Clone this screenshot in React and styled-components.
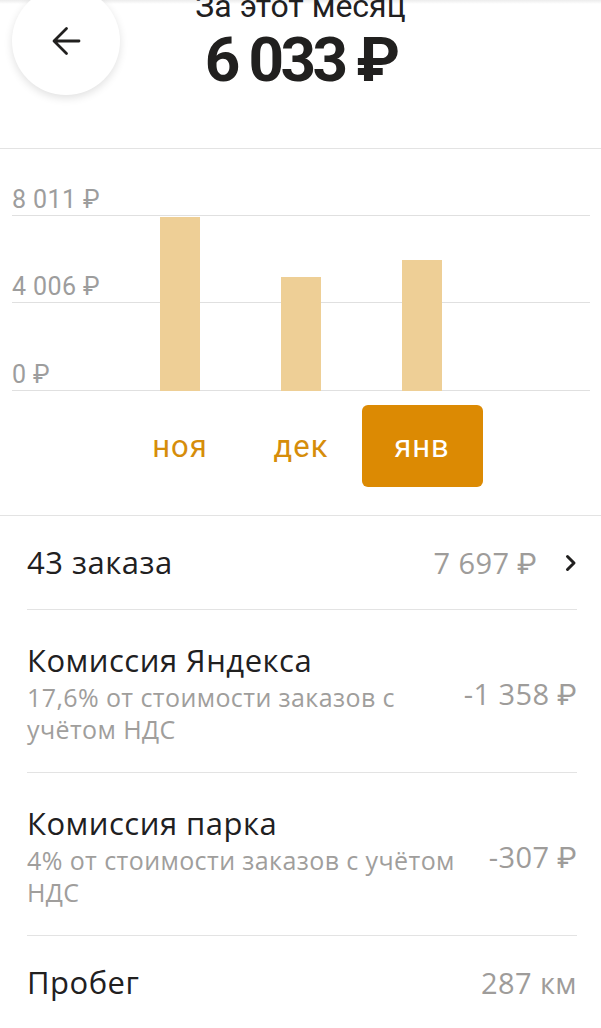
import React from 'react';
import styled, { createGlobalStyle } from 'styled-components';

const GlobalStyle = createGlobalStyle`
  html, body {
    margin: 0;
    padding: 0;
    background: #fff;
  }
  body {
    font-family: "Open Sans", Roboto, "DejaVu Sans", sans-serif;
    color: #21201f;
    overflow: hidden;
  }
`;

const Page = styled.div`
  width: 601px;
  height: 1028px;
  overflow: hidden;
  background: #fff;
`;

const Header = styled.div`
  display: grid;
  grid-template-columns: 120px 1fr 120px;
  height: 148px;
  border-bottom: 1px solid #e3e3e3;
  background: linear-gradient(#ececec, #fff 4px);
`;

const BackButton = styled.button`
  width: 108px;
  height: 108px;
  margin: -13px 0 0 12px;
  border: none;
  border-radius: 50%;
  background: #fff;
  box-shadow: 0 3px 8px rgba(0, 0, 0, 0.12);
  display: flex;
  align-items: center;
  justify-content: center;
  padding: 0;
  cursor: pointer;
`;

const TitleBlock = styled.div`
  display: flex;
  flex-direction: column;
  align-items: center;
  margin-top: -12px;
`;

const Caption = styled.div`
  font-family: Roboto, sans-serif;
  font-size: 32px;
  line-height: 36px;
  color: #21201f;
`;

const Total = styled.div`
  font-family: Roboto, sans-serif;
  font-weight: 700;
  font-size: 62px;
  line-height: 62px;
  letter-spacing: -3.6px;
  margin-top: 5px;
`;

const Chart = styled.div`
  padding: 0 11px 28px 12px;
`;

const Plot = styled.div`
  display: grid;
`;

const Layer = styled.div`
  grid-area: 1 / 1;
`;

const GridRow = styled.div`
  height: ${(p) => p.$h}px;
  border-bottom: 1px solid #e0e0e0;
  display: flex;
  align-items: flex-end;
  box-sizing: border-box;
`;

const AxisLabel = styled.span`
  font-family: Roboto, sans-serif;
  font-size: 25px;
  line-height: 25px;
  letter-spacing: 0.4px;
  color: #9d9d9d;
  margin-bottom: 3px;
`;

const Bars = styled.div`
  display: flex;
  justify-content: center;
  align-items: flex-end;
  height: 100%;
`;

const BarCol = styled.div`
  width: 121px;
  display: flex;
  justify-content: center;
`;

const Bar = styled.div`
  width: 40px;
  background: #eecf96;
`;

const Months = styled.div`
  display: flex;
  justify-content: center;
  margin-top: 14px;
`;

const Month = styled.div`
  width: 121px;
  height: 82px;
  border-radius: 6px;
  display: flex;
  align-items: center;
  justify-content: center;
  font-family: Roboto, sans-serif;
  font-size: 31px;
  letter-spacing: 1px;
  color: ${(p) => (p.$active ? '#fff' : '#d68d0a')};
  background: ${(p) => (p.$active ? '#dc8a03' : 'transparent')};
`;

const List = styled.div`
  border-top: 1px solid #e3e3e3;
`;

const Row = styled.div`
  margin: 0 24px 0 27px;
  display: flex;
  align-items: center;
  gap: 20px;
  padding: ${(p) => (p.$tall ? '32px 0 27px' : '28px 0')};
  border-bottom: ${(p) => (p.$last ? 'none' : '1px solid #e3e3e3')};
`;

const RowText = styled.div`
  flex: 1;
  min-width: 0;
`;

const RowTitle = styled.div`
  font-size: 31px;
  line-height: 37px;
  letter-spacing: 0.5px;
  color: #21201f;
`;

const RowSub = styled.div`
  font-size: 25px;
  line-height: 32px;
  letter-spacing: 0.4px;
  margin-top: 2px;
  color: #a09e9c;
`;

const RowValue = styled.div`
  font-size: 29px;
  line-height: 37px;
  letter-spacing: 0.4px;
  color: #9e9c9a;
  white-space: nowrap;
  display: flex;
  align-items: center;
`;

const Chevron = styled.svg`
  margin-left: 28px;
`;

const chartData = [
  { month: 'ноя', value: 8011 },
  { month: 'дек', value: 5233 },
  { month: 'янв', value: 6033, active: true },
];

const MAX = 8011;
const PLOT_H = 174;

const ArrowLeft = () => (
  <svg width="30" height="30" viewBox="0 0 30 30" fill="none">
    <path
      d="M28 15H3.5M15.5 2.5L3 15l12.5 12.5"
      stroke="#21201f"
      strokeWidth="2.8"
      strokeLinecap="round"
      strokeLinejoin="round"
    />
  </svg>
);

const App = () => {
  return (
    <Page>
      <GlobalStyle />
      <Header>
        <div>
          <BackButton aria-label="Назад">
            <ArrowLeft />
          </BackButton>
        </div>
        <TitleBlock>
          <Caption>За этот месяц</Caption>
          <Total>6 033 ₽</Total>
        </TitleBlock>
        <div />
      </Header>

      <Chart>
        <Plot>
          <Layer>
            <GridRow $h={67}>
              <AxisLabel>8 011 ₽</AxisLabel>
            </GridRow>
            <GridRow $h={87}>
              <AxisLabel>4 006 ₽</AxisLabel>
            </GridRow>
            <GridRow $h={88}>
              <AxisLabel>0 ₽</AxisLabel>
            </GridRow>
          </Layer>
          <Layer>
            <Bars>
              {chartData.map((d) => (
                <BarCol key={d.month}>
                  <Bar style={{ height: (d.value / MAX) * PLOT_H }} />
                </BarCol>
              ))}
            </Bars>
          </Layer>
        </Plot>
        <Months>
          {chartData.map((d) => (
            <Month key={d.month} $active={d.active}>
              {d.month}
            </Month>
          ))}
        </Months>
      </Chart>

      <List>
        <Row>
          <RowText>
            <RowTitle>43 заказа</RowTitle>
          </RowText>
          <RowValue>
            7 697 ₽
            <Chevron width="12" height="18" viewBox="0 0 12 18" fill="none">
              <path
                d="M2.5 2.5L9 9l-6.5 6.5"
                stroke="#21201f"
                strokeWidth="3"
                strokeLinecap="round"
                strokeLinejoin="round"
              />
            </Chevron>
          </RowValue>
        </Row>
        <Row $tall>
          <RowText>
            <RowTitle>Комиссия Яндекса</RowTitle>
            <RowSub>17,6% от стоимости заказов с учётом НДС</RowSub>
          </RowText>
          <RowValue>-1 358 ₽</RowValue>
        </Row>
        <Row $tall>
          <RowText>
            <RowTitle>Комиссия парка</RowTitle>
            <RowSub>4% от стоимости заказов с учётом НДС</RowSub>
          </RowText>
          <RowValue>-307 ₽</RowValue>
        </Row>
        <Row $last>
          <RowText>
            <RowTitle>Пробег</RowTitle>
          </RowText>
          <RowValue>287 км</RowValue>
        </Row>
      </List>
    </Page>
  );
};

export default App;
